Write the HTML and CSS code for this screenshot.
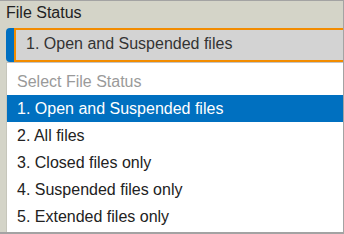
FILE: index.html
```html
<!DOCTYPE html>
<html>
<head>
<meta charset="utf-8">
<link rel="stylesheet" href="styles.css">
</head>
<body>
<div class="frame">
  <div class="label">File Status</div>
  <div class="select">
    <div class="select-box">1. Open and Suspended files</div>
  </div>
  <ul class="dropdown">
    <li class="option placeholder">Select File Status</li>
    <li class="option selected">1. Open and Suspended files</li>
    <li class="option">2. All files</li>
    <li class="option">3. Closed files only</li>
    <li class="option">4. Suspended files only</li>
    <li class="option">5. Extended files only</li>
  </ul>
</div>
</body>
</html>
```

FILE: styles.css
```css
html, body {
  margin: 0;
  padding: 0;
}
body {
  width: 344px;
  height: 234px;
  overflow: hidden;
  font-family: "Liberation Sans", Arial, sans-serif;
  font-size: 16px;
  color: #222;
}
.frame {
  box-sizing: border-box;
  width: 344px;
  height: 234px;
  background: #d4d4c8;
  border-top: 1px solid #a3a3a3;
  border-right: 1px solid #a3a3a3;
  border-bottom: 2px solid #a3a3a3;
  padding-left: 6px;
  display: flex;
  flex-direction: column;
}
.label {
  margin-top: 3px;
  height: 18px;
  line-height: 18px;
  color: #222;
}
.select {
  margin-top: 6px;
  background: #0070c0;
  border-radius: 4px 0 0 4px;
  padding-left: 8px;
  height: 34px;
  display: flex;
}
.select-box {
  flex: 1;
  box-sizing: border-box;
  background: #d3d3d3;
  border: 2px solid #f28c00;
  border-right: none;
  padding: 0 0 2px 10px;
  line-height: 28px;
  color: #333;
}
.dropdown {
  list-style: none;
  margin: 0 0 0 1px;
  padding: 5px 0 0 0;
  flex: 1;
  background: #fff;
  border-top: 1px solid #c4c4c4;
  box-shadow: -1px 0 0 #c6c6bb;
}
.option {
  height: 27px;
  line-height: 27px;
  padding-left: 10px;
  color: #222;
  white-space: nowrap;
}
.placeholder {
  color: #9a9a9a;
}
.selected {
  background: #0070c0;
  color: #fff;
}
```
